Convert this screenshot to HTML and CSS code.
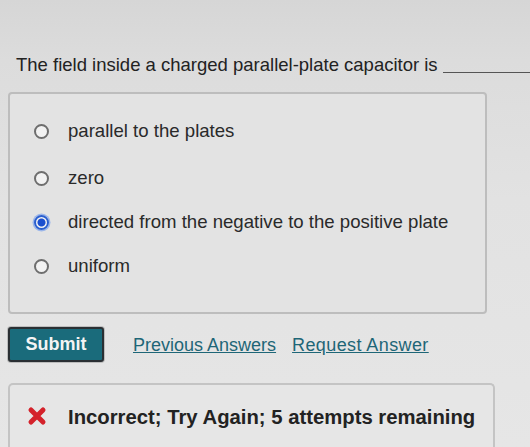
FILE: index.html
```html
<!DOCTYPE html>
<html>
<head>
<meta charset="utf-8">
<link rel="stylesheet" href="styles.css">
</head>
<body>
<div class="page">
  <p class="question">The field inside a charged parallel-plate capacitor is <span class="blank"></span></p>
  <div class="options">
    <label class="option"><span class="radio"></span><span class="opt-text">parallel to the plates</span></label>
    <label class="option"><span class="radio"></span><span class="opt-text">zero</span></label>
    <label class="option"><span class="radio checked"></span><span class="opt-text">directed from the negative to the positive plate</span></label>
    <label class="option"><span class="radio"></span><span class="opt-text">uniform</span></label>
  </div>
  <div class="actions">
    <button class="submit">Submit</button>
    <a class="link" href="#">Previous Answers</a>
    <a class="link" href="#">Request Answer</a>
  </div>
  <div class="feedback">
    <svg class="xicon" width="20" height="20" viewBox="0 0 20 20"><path d="M4 4 L16 16 M16 4 L4 16" stroke="#d4222b" stroke-width="5" stroke-linecap="round"/></svg>
    <span class="fb-text">Incorrect; Try Again; 5 attempts remaining</span>
  </div>
</div>
</body>
</html>
```
FILE: styles.css
```css
html, body {
  margin: 0;
  padding: 0;
}
body {
  width: 530px;
  height: 447px;
  overflow: hidden;
  background: linear-gradient(#d6d6d6 0px, #dcdcdc 60px, #e2e2e2 200px, #e6e6e6 447px);
  font-family: "Liberation Sans", Arial, sans-serif;
  color: #2a2a2a;
}
.page {
  padding: 55px 0 0 8px;
}
.question {
  margin: 0 0 0 8px;
  font-size: 18.5px;
  line-height: 20px;
  color: #222;
  white-space: nowrap;
}
.blank {
  display: inline-block;
  width: 92px;
  border-bottom: 1px solid #555;
  vertical-align: -2px;
}
.options {
  margin-top: 17px;
  width: 479px;
  height: 222px;
  box-sizing: border-box;
  border: 2px solid #bdbdbd;
  border-radius: 4px;
  background: #e3e3e3;
  padding: 27px 0 0 24px;
  display: flex;
  flex-direction: column;
  gap: 26px;
}
.option {
  display: flex;
  align-items: center;
  height: 20px;
}
.option:nth-child(2) { margin-top: 1px; }
.option:nth-child(3) { margin-top: -2px; }
.option:nth-child(4) { margin-top: -2px; }
.radio {
  width: 11px;
  height: 11px;
  border: 2px solid #6e6e6e;
  border-radius: 50%;
  background: #f2f2f2;
  flex: none;
}
.radio.checked {
  border: 2px solid #2a5fd0;
  background: radial-gradient(circle, #1b4fcf 0 3.5px, #f2f2f2 4.5px);
  box-shadow: 0 0 0 1.5px #9bb6ea;
}
.opt-text {
  margin-left: 19px;
  font-size: 18.6px;
  color: #2a2a2a;
}
.actions {
  margin-top: 12px;
  display: flex;
  align-items: center;
  height: 36px;
}
.submit {
  width: 96px;
  height: 35px;
  box-sizing: border-box;
  background: #1a6b7b;
  border: 2px solid #2a2f33;
  border-radius: 3px;
  box-shadow: 0 0 0 1px #bcbcbc;
  color: #f4f4f4;
  font-family: "Liberation Sans", Arial, sans-serif;
  font-weight: bold;
  font-size: 18px;
  padding: 0;
}
.link {
  font-size: 18px;
  color: #1e6677;
  text-decoration: underline;
  margin-left: 29px;
  margin-top: 2px;
}
.link + .link {
  margin-left: 16px;
  letter-spacing: 0.4px;
}
.feedback {
  margin-top: 21px;
  width: 487px;
  height: 75px;
  box-sizing: border-box;
  border: 2px solid #c4c4c4;
  border-bottom: none;
  border-radius: 5px 5px 0 0;
  background: #e6e6e6;
  display: flex;
  align-items: flex-start;
  padding: 21px 0 0 17px;
}
.xicon {
  flex: none;
}
.fb-text {
  margin-left: 21px;
  font-size: 20.3px;
  line-height: 23px;
  font-weight: bold;
  color: #222;
}
```
